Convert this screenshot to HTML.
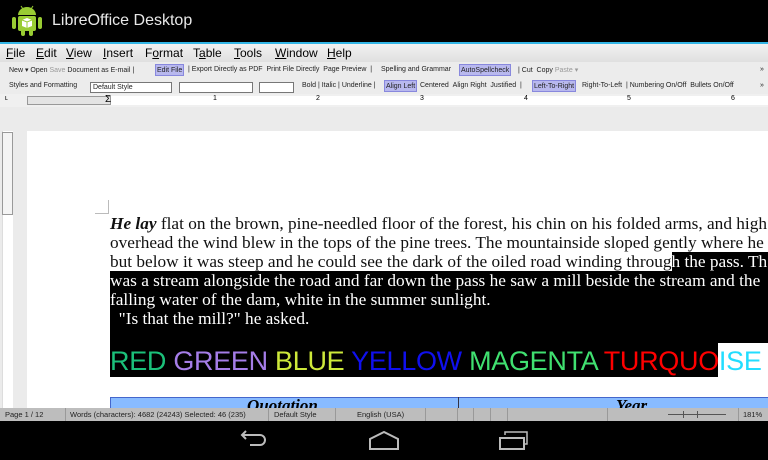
<!DOCTYPE html>
<html><head><meta charset="utf-8"><style>
*{margin:0;padding:0;box-sizing:border-box}
body{width:768px;height:460px;overflow:hidden;background:#000;position:relative;font-family:"Liberation Sans",sans-serif}
.abs{position:absolute}
.title{left:0;top:0;width:768px;height:42px;background:#000}
.title span{position:absolute;left:52px;top:12px;color:#e8e8e8;font-size:16px}
.blue{left:0;top:42px;width:768px;height:2px;background:#33b5e5}
.menu{left:0;top:44px;width:768px;height:18px;background:linear-gradient(#f2f2f2,#e0e0e0);font-size:12px;color:#000}
.menu span{position:absolute;top:2px}
.tb{left:0;width:768px;height:16px;background:#ececec;font-size:7px;color:#222;white-space:nowrap}
.tb span{position:absolute;top:4px}
.hl{background:#b8b8ee;border:1px solid #8888dd;padding:0 1px;top:2px!important;height:12px;line-height:11px}
.g{color:#999}
.sel{border:1px solid #777;background:#fff;height:11px;top:2px}
.ruler{left:0;top:94px;width:768px;height:13px;background:#f0f0f0;font-size:7px}
.doc{left:0;top:107px;width:768px;height:301px;background:#ebebeb;overflow:hidden}
.page{left:27px;top:24px;width:741px;height:300px;background:#fff}
.txt{font-family:"Liberation Serif",serif;font-size:17.3px;line-height:19px;color:#111;white-space:nowrap;letter-spacing:0}
.status{left:0;top:408px;width:768px;height:13px;background:#bdbdbd;font-size:7.5px;color:#222}
.status span{position:absolute;top:2px}
.status i{position:absolute;top:0;width:1px;height:13px;background:#999}
</style></head><body>
<div class="abs title">
<svg class="abs" style="left:12px;top:5px" width="30" height="32" viewBox="0 0 30 32">
<rect x="0" y="12" width="4" height="12" rx="2" fill="#9c3"/>
<rect x="26" y="12" width="4" height="12" rx="2" fill="#9c3"/>
<path d="M6 10a9 8 0 0 1 18 0z" fill="#9c3"/>
<rect x="6" y="11" width="18" height="15" rx="2" fill="#9c3"/>
<rect x="9" y="24" width="4" height="7" rx="2" fill="#9c3"/><rect x="17" y="24" width="4" height="7" rx="2" fill="#9c3"/>
<line x1="9" y1="1" x2="11" y2="4" stroke="#9c3"/><line x1="21" y1="1" x2="19" y2="4" stroke="#9c3"/>
<path d="M10 15l5-2 5 2v6l-5 2-5-2z" fill="#fff"/><path d="M10 15l5 2 5-2M15 17v6" stroke="#9c3" fill="none"/>
</svg>
<span>LibreOffice Desktop</span></div>
<div class="abs blue"></div>
<div class="abs menu">
<span style="left:6px"><u>F</u>ile</span><span style="left:36px"><u>E</u>dit</span><span style="left:66px"><u>V</u>iew</span><span style="left:103px"><u>I</u>nsert</span><span style="left:145px">F<u>o</u>rmat</span><span style="left:193px">T<u>a</u>ble</span><span style="left:234px"><u>T</u>ools</span><span style="left:275px"><u>W</u>indow</span><span style="left:327px"><u>H</u>elp</span></div>
<div class="abs tb" style="top:62px">
<span style="left:9px">New ▾ Open <span class="g" style="position:static">Save</span> Document as E-mail |</span>
<span class="hl" style="left:155px">Edit File</span>
<span style="left:188px">| Export Directly as PDF &nbsp;Print File Directly &nbsp;Page Preview &nbsp;|</span>
<span style="left:381px">Spelling and Grammar</span>
<span class="hl" style="left:459px">AutoSpellcheck</span>
<span style="left:518px">| Cut &nbsp;Copy <span class="g" style="position:static">Paste ▾</span></span>
<span style="left:760px">»</span></div>
<div class="abs tb" style="top:78px">
<span style="left:9px">Styles and Formatting</span>
<span class="sel" style="left:90px;width:82px;padding-left:2px;line-height:9px">Default Style</span>
<span class="sel" style="left:179px;width:74px"></span>
<span class="sel" style="left:259px;width:35px"></span>
<span style="left:302px">Bold | Italic | Underline |</span>
<span class="hl" style="left:384px">Align Left</span>
<span style="left:420px">Centered &nbsp;Align Right &nbsp;Justified &nbsp;|</span>
<span class="hl" style="left:532px">Left-To-Right</span>
<span style="left:582px">Right-To-Left &nbsp;| Numbering On/Off &nbsp;Bullets On/Off</span>
<span style="left:760px">»</span></div>
<div class="abs ruler">
<div class="abs" style="left:27px;top:2px;width:84px;height:9px;border:1px solid #999;background:#e4e4e4"></div>
<div class="abs" style="left:111px;top:2px;width:657px;height:9px;background:#fff"></div>
<span class="abs" style="left:5px;top:1px">ʟ</span>
<span class="abs" style="left:105px;top:0;font-size:10px">Σ</span>
<span class="abs" style="left:213px;top:1px">1</span><span class="abs" style="left:316px;top:1px">2</span><span class="abs" style="left:420px;top:1px">3</span><span class="abs" style="left:524px;top:1px">4</span><span class="abs" style="left:627px;top:1px">5</span><span class="abs" style="left:731px;top:1px">6</span></div>
<div class="abs doc">
<div class="abs" style="left:2px;top:24px;width:11px;height:280px;background:#fff;border-left:1px solid #ddd"></div>
<div class="abs" style="left:2px;top:25px;width:11px;height:83px;border:1px solid #999;background:#f4f4f4"></div>
<div class="abs page"></div>
<div class="abs" style="left:95px;top:93px;width:14px;height:14px;border-right:1px solid #bbb;border-bottom:1px solid #bbb"></div>
<div class="abs" style="left:110px;top:164px;width:658px;height:106px;background:#000"></div>
<div class="abs txt" style="left:110px;top:107px">
<div><b><i>He lay</i></b> flat on the brown, pine-needled floor of the forest, his chin on his folded arms, and high</div>
<div>overhead the wind blew in the tops of the pine trees. The mountainside sloped gently where he</div>
<div>but below it was steep and he could see the dark of the oiled road winding throug<span style="color:#fff;background:#000;padding-right:200px">h the pass. Th</span></div>
<div style="color:#fff">was a stream alongside the road and far down the pass he saw a mill beside the stream and the</div>
<div style="color:#fff">falling water of the dam, white in the summer sunlight.</div>
<div style="color:#fff">&nbsp;&nbsp;"Is that the mill?" he asked.</div></div>
<div class="abs" style="left:718px;top:236px;width:50px;height:34px;background:#fff"></div>
<div class="abs" style="left:110px;top:238px;font-size:27px;white-space:nowrap;letter-spacing:-0.3px;line-height:32px">
<span style="color:#1bc07a">RED</span> <span style="color:#a57de8">GREEN</span> <span style="color:#cde83a">BLUE</span> <span style="color:#1010ee">YELLOW</span> <span style="color:#40e070">MAGENTA</span> <span style="color:#f00">TURQUO</span><span style="color:#22ddff">ISE</span></div>
<div class="abs" style="left:110px;top:290px;width:658px;height:20px;background:#88bbff;border-top:1px solid #4466cc;border-left:1px solid #4466cc"></div>
<div class="abs" style="left:458px;top:290px;width:1px;height:20px;background:#334"></div>
<div class="abs" style="left:247px;top:289px;font:bold italic 17px 'Liberation Serif',serif">Quotation</div>
<div class="abs" style="left:616px;top:289px;font:bold italic 17px 'Liberation Serif',serif">Year</div>
</div>
<div class="abs status">
<span style="left:5px">Page 1 / 12</span><i style="left:65px"></i>
<span style="left:70px">Words (characters): 4682 (24243) Selected: 46 (235)</span><i style="left:268px"></i>
<span style="left:274px">Default Style</span><i style="left:335px"></i>
<span style="left:357px">English (USA)</span><i style="left:425px"></i><i style="left:457px"></i><i style="left:473px"></i><i style="left:490px"></i><i style="left:507px"></i><i style="left:607px"></i>
<div class="abs" style="left:668px;top:6px;width:58px;height:1px;background:#555"></div>
<div class="abs" style="left:683px;top:3px;width:1px;height:7px;background:#555"></div>
<div class="abs" style="left:697px;top:3px;width:1px;height:7px;background:#555"></div>
<i style="left:738px"></i><span style="left:743px">181%</span></div>
<svg class="abs" style="left:0;top:421px" width="768" height="39">
<path d="M242 14h18a5 5 0 0 1 0 10h-10M246 10l-4 4 4 4" stroke="#bbb" stroke-width="2" fill="none"/>
<path d="M370 28v-10l14-7 14 7v10z" stroke="#bbb" stroke-width="2" fill="none"/>
<rect x="500" y="17" width="24" height="11" stroke="#bbb" stroke-width="2" fill="none"/>
<path d="M505 14v-3h22v12h-3" stroke="#bbb" stroke-width="1.5" fill="none"/>
</svg>
</body></html>
